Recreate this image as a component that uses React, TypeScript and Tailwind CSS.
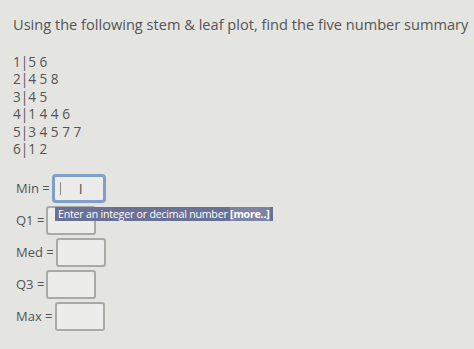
import React from 'react';

const stems: [string, string][] = [
  ['1', '5 6'],
  ['2', '4 5 8'],
  ['3', '4 5'],
  ['4', '1 4 4 6'],
  ['5', '3 4 5 7 7'],
  ['6', '1 2'],
];

const Field = ({ label, active }: { label: string; active?: boolean }) => (
  <div className="flex items-center gap-[2px]">
    <span className="text-[13px] text-[#555]">{label} =</span>
    <div
      className={
        active
          ? 'relative w-[54px] h-[29px] rounded-[4px] border-[3px] border-[#7f9fcb] bg-[#ebebea] flex items-center pl-[5px]'
          : 'w-[50px] h-[29px] rounded-[3px] border-2 border-[#a9a9a7] bg-[#ececeb]'
      }
    >
      {active && (
        <>
          <span className="w-px h-[13px] bg-[#8a8a8a]" />
          <span className="ml-[18px] text-[#555] text-[14px] leading-none">I</span>
        </>
      )}
    </div>
  </div>
);

export default function App() {
  return (
    <div
      className="w-[474px] h-[349px] bg-[#e4e4e1] text-[#555] pl-[13px] pt-[14px] overflow-hidden"
      style={{ fontFamily: '"Open Sans", "DejaVu Sans", sans-serif' }}
    >
      <h1 className="text-[14.6px] leading-[20px] whitespace-nowrap">
        Using the following stem &amp; leaf plot, find the five number summary
      </h1>

      <div className="mt-[19px] text-[13.6px] leading-[17.4px]">
        {stems.map(([s, l]) => (
          <div key={s}>
            {s}|{l}
          </div>
        ))}
      </div>

      <div className="relative mt-[17px] pl-[3px] flex flex-col gap-[3px]">
        <Field label="Min" active />
        <Field label="Q1" />
        <div className="absolute left-[42px] top-[33px] bg-[#6a7194] text-white text-[10.6px] tracking-[-0.2px] leading-[14px] px-[3px] whitespace-nowrap">
          Enter an integer or decimal number <span className="font-bold bg-[#7d84a3]">[more..]</span>
        </div>
        <Field label="Med" />
        <Field label="Q3" />
        <Field label="Max" />
      </div>
    </div>
  );
}
